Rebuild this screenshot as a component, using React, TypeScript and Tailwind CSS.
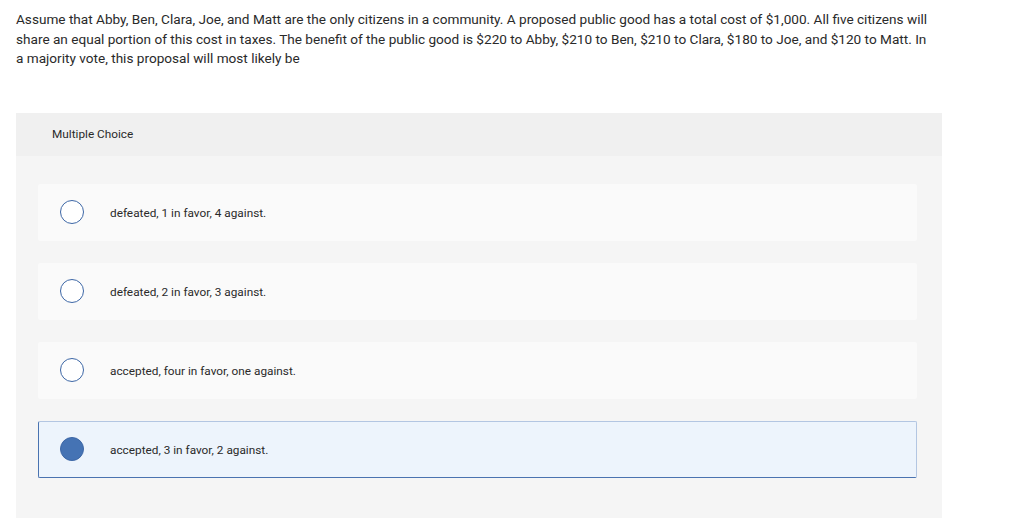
import React from 'react'

const options = [
  'defeated, 1 in favor, 4 against.',
  'defeated, 2 in favor, 3 against.',
  'accepted, four in favor, one against.',
  'accepted, 3 in favor, 2 against.',
]

const selected = 3

export default function App() {
  return (
    <div
      className="h-[522px] w-[1024px] overflow-hidden bg-white text-[#333]"
      style={{ fontFamily: 'Roboto, "Open Sans", sans-serif' }}
    >
      <p className="w-[948px] px-4 pt-[10px] text-[13.6px] leading-[19.5px] text-[#2a2a2a]">
        Assume that Abby, Ben, Clara, Joe, and Matt are the only citizens in a community. A proposed public good has a
        total cost of $1,000. All five citizens will share an equal portion of this cost in taxes. The benefit of the
        public good is $220 to Abby, $210 to Ben, $210 to Clara, $180 to Joe, and $120 to Matt. In a majority vote, this
        proposal will most likely be
      </p>

      <div className="ml-4 mt-[44px] w-[926px] rounded-t-[2px] bg-[#f5f5f5]">
        <div className="flex h-[43px] items-center bg-[#f0f0f0] pl-9 pt-[2px] text-[11.8px] text-[#2a2a2a]">
          Multiple Choice
        </div>
        <div className="flex flex-col gap-[22px] pb-10 pl-[22px] pr-[25px] pt-7">
          {options.map((opt, i) => {
            const on = i === selected
            return (
              <div
                key={opt}
                className={
                  on
                    ? 'flex h-[57px] items-center rounded-[2px] border border-[#b3c6e2] border-b-[#4a73b0] border-l-[#4a73b0] bg-[#edf4fc] pl-[21px]'
                    : 'flex h-[57px] items-center rounded-[2px] bg-[#fafafa] pl-[22px]'
                }
              >
                <span
                  className={
                    on
                      ? 'h-6 w-6 shrink-0 rounded-full border border-[#3d67a6] bg-[#4573b4]'
                      : 'h-6 w-6 shrink-0 rounded-full border border-[#3d67a6] bg-white'
                  }
                />
                <span className="ml-[26px] pt-[3px] text-[11.8px] text-[#2a2a2a]">{opt}</span>
              </div>
            )
          })}
        </div>
      </div>
    </div>
  )
}
